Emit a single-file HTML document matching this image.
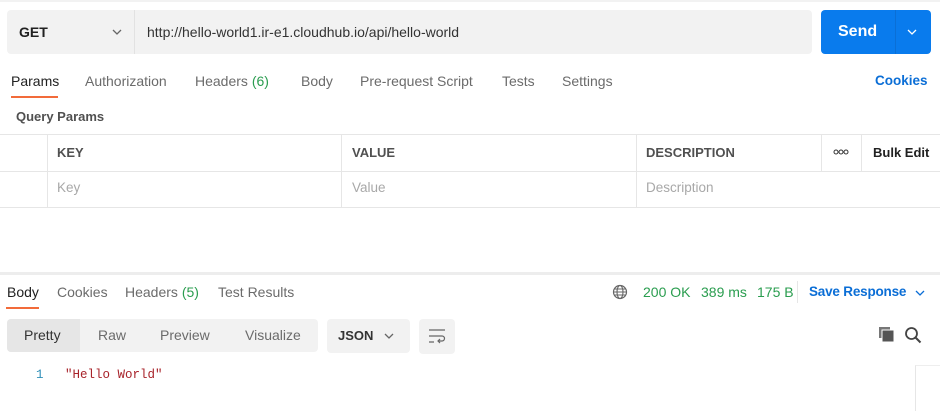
<!DOCTYPE html>
<html><head><style>
*{margin:0;padding:0;box-sizing:border-box}
body{width:940px;height:411px;overflow:hidden;background:#fff;font-family:"Liberation Sans",sans-serif;font-size:13.5px;color:#212121;position:relative}
.a{position:absolute;white-space:nowrap}
.g{color:#6b6b6b}
.l{position:absolute;background:#e6e6e6}
</style></head><body>
<div class="l" style="left:0;top:0;width:940px;height:2px;background:#f2f2f2"></div>
<div class="a" style="left:7px;top:10px;width:805px;height:44px;background:#f2f2f2;border-radius:4px"></div>
<div class="l" style="left:134px;top:10px;width:1px;height:44px;background:#e2e2e2"></div>
<div class="a" style="left:19px;top:24px;font-weight:bold;font-size:14px">GET</div>
<svg class="a" style="left:111px;top:28px" width="12" height="8"><path d="M2 2l4 4 4-4" stroke="#666" fill="none" stroke-width="1.3"/></svg>
<div class="a" style="left:147px;top:24px;font-size:14px;color:#333">http://hello-world1.ir-e1.cloudhub.io/api/hello-world</div>
<div class="a" style="left:821px;top:10px;width:110px;height:44px;background:#097bed;border-radius:4px"></div>
<div class="l" style="left:895px;top:10px;width:1px;height:44px;background:#0a6fd6"></div>
<div class="a" style="left:838px;top:23px;color:#fff;font-weight:bold;font-size:16px">Send</div>
<svg class="a" style="left:906px;top:28px" width="12" height="8"><path d="M2 2l4 4 4-4" stroke="#fff" fill="none" stroke-width="1.3"/></svg>
<div class="a" style="left:11px;top:73px;font-size:14px">Params</div>
<div class="a" style="left:11px;top:96px;width:47px;height:2px;background:#f26b3a"></div>
<div class="a g" style="left:85px;top:73px;font-size:14px">Authorization</div>
<div class="a g" style="left:195px;top:73px;font-size:14px">Headers <span style="color:#2a9d4f">(6)</span></div>
<div class="a g" style="left:301px;top:73px;font-size:14px">Body</div>
<div class="a g" style="left:360px;top:73px;font-size:14px">Pre-request Script</div>
<div class="a g" style="left:502px;top:73px;font-size:14px">Tests</div>
<div class="a g" style="left:562px;top:73px;font-size:14px">Settings</div>
<div class="a" style="left:875px;top:73px;font-size:13.5px;color:#0b6ed6;font-weight:bold">Cookies</div>
<div class="a" style="left:16px;top:109px;font-weight:bold;color:#505050;font-size:13px">Query Params</div>
<div class="l" style="left:0;top:134px;width:940px;height:1px"></div>
<div class="l" style="left:0;top:171px;width:940px;height:1px"></div>
<div class="l" style="left:0;top:207px;width:940px;height:1px"></div>
<div class="l" style="left:47px;top:134px;width:1px;height:73px"></div>
<div class="l" style="left:341px;top:134px;width:1px;height:73px"></div>
<div class="l" style="left:636px;top:134px;width:1px;height:73px"></div>
<div class="l" style="left:821px;top:134px;width:1px;height:37px"></div>
<div class="l" style="left:861px;top:134px;width:1px;height:37px"></div>
<div class="a" style="left:57px;top:145px;font-weight:bold;color:#505050;font-size:13px">KEY</div>
<div class="a" style="left:352px;top:145px;font-weight:bold;color:#505050;font-size:13px">VALUE</div>
<div class="a" style="left:646px;top:145px;font-weight:bold;color:#505050;font-size:13px">DESCRIPTION</div>
<svg class="a" style="left:833px;top:149px" width="16" height="6"><circle cx="3" cy="3" r="2" fill="none" stroke="#333" stroke-width="1"/><circle cx="8" cy="3" r="2" fill="none" stroke="#333" stroke-width="1"/><circle cx="13" cy="3" r="2" fill="none" stroke="#333" stroke-width="1"/></svg>
<div class="a" style="left:873px;top:145px;font-weight:bold;font-size:13px">Bulk Edit</div>
<div class="a" style="left:57px;top:180px;color:#a8a8a8">Key</div>
<div class="a" style="left:352px;top:180px;color:#a8a8a8">Value</div>
<div class="a" style="left:646px;top:180px;color:#a8a8a8">Description</div>
<div class="l" style="left:0;top:272px;width:940px;height:3px;background:#ededed"></div>
<div class="a" style="left:7px;top:284px;font-size:14px">Body</div>
<div class="a" style="left:6px;top:307px;width:33px;height:2px;background:#f26b3a"></div>
<div class="a g" style="left:57px;top:284px;font-size:14px">Cookies</div>
<div class="a g" style="left:125px;top:284px;font-size:14px">Headers <span style="color:#2a9d4f">(5)</span></div>
<div class="a g" style="left:218px;top:284px;font-size:14px">Test Results</div>
<svg class="a" style="left:612px;top:284px" width="16" height="16"><circle cx="8" cy="8" r="6.5" fill="none" stroke="#666" stroke-width="1.2"/><ellipse cx="8" cy="8" rx="3" ry="6.5" fill="none" stroke="#666" stroke-width="1.1"/><path d="M1.5 8h13M2.5 5h11M2.5 11h11" stroke="#666" stroke-width="1"/></svg>
<div class="a" style="left:643px;top:284px;color:#2a9d4f;font-size:14px">200 OK</div>
<div class="a" style="left:701px;top:284px;color:#2a9d4f;font-size:14px">389 ms</div>
<div class="a" style="left:757px;top:284px;color:#2a9d4f;font-size:14px">175 B</div>
<div class="l" style="left:797px;top:281px;width:1px;height:22px"></div>
<div class="a" style="left:809px;top:284px;color:#0b6ed6;font-weight:bold;font-size:13.5px;letter-spacing:-0.2px">Save Response</div>
<svg class="a" style="left:914px;top:289px" width="12" height="8"><path d="M2 2l4 4 4-4" stroke="#0b6ed6" fill="none" stroke-width="1.3"/></svg>
<div class="a" style="left:7px;top:319px;width:311px;height:33px;background:#f2f2f2;border-radius:4px"></div>
<div class="a" style="left:7px;top:319px;width:73px;height:33px;background:#e6e6e6;border-radius:4px 0 0 4px"></div>
<div class="a" style="left:24px;top:327px;font-size:14px;color:#333">Pretty</div>
<div class="a g" style="left:98px;top:327px;font-size:14px">Raw</div>
<div class="a g" style="left:160px;top:327px;font-size:14px">Preview</div>
<div class="a g" style="left:245px;top:327px;font-size:14px">Visualize</div>
<div class="a" style="left:327px;top:319px;width:83px;height:34px;background:#f2f2f2;border-radius:4px"></div>
<div class="a" style="left:338px;top:328px;font-weight:bold;color:#333;font-size:13px">JSON</div>
<svg class="a" style="left:383px;top:332px" width="12" height="8"><path d="M2 2l4 4 4-4" stroke="#666" fill="none" stroke-width="1.3"/></svg>
<div class="a" style="left:419px;top:319px;width:36px;height:35px;background:#f2f2f2;border-radius:4px"></div>
<svg class="a" style="left:428px;top:328px" width="18" height="16"><path d="M1 2h16M1 8h13a2.5 2.5 0 0 1 0 5h-4M1 14h5M12 11l-2 2 2 2" stroke="#666" fill="none" stroke-width="1.2"/></svg>
<svg class="a" style="left:878px;top:326px" width="18" height="18"><rect x="1" y="1" width="11" height="11" fill="#777"/><rect x="4" y="4" width="12" height="12" fill="#555" stroke="#fff" stroke-width="1"/></svg>
<svg class="a" style="left:904px;top:326px" width="18" height="18"><circle cx="7.5" cy="7.5" r="5.5" fill="none" stroke="#444" stroke-width="1.8"/><path d="M11.5 11.5l5 5" stroke="#444" stroke-width="2"/></svg>
<div class="a" style="left:36px;top:368px;color:#2f8fb8;font-family:'Liberation Mono',monospace;font-size:12.5px">1</div>
<div class="a" style="left:65px;top:368px;color:#a8232a;font-family:'Liberation Mono',monospace;font-size:12.5px">"Hello World"</div>
<div class="a" style="left:915px;top:365px;width:26px;height:46px;border-left:1px solid #e6e6e6;border-top:1px solid #eee"></div>
</body></html>
